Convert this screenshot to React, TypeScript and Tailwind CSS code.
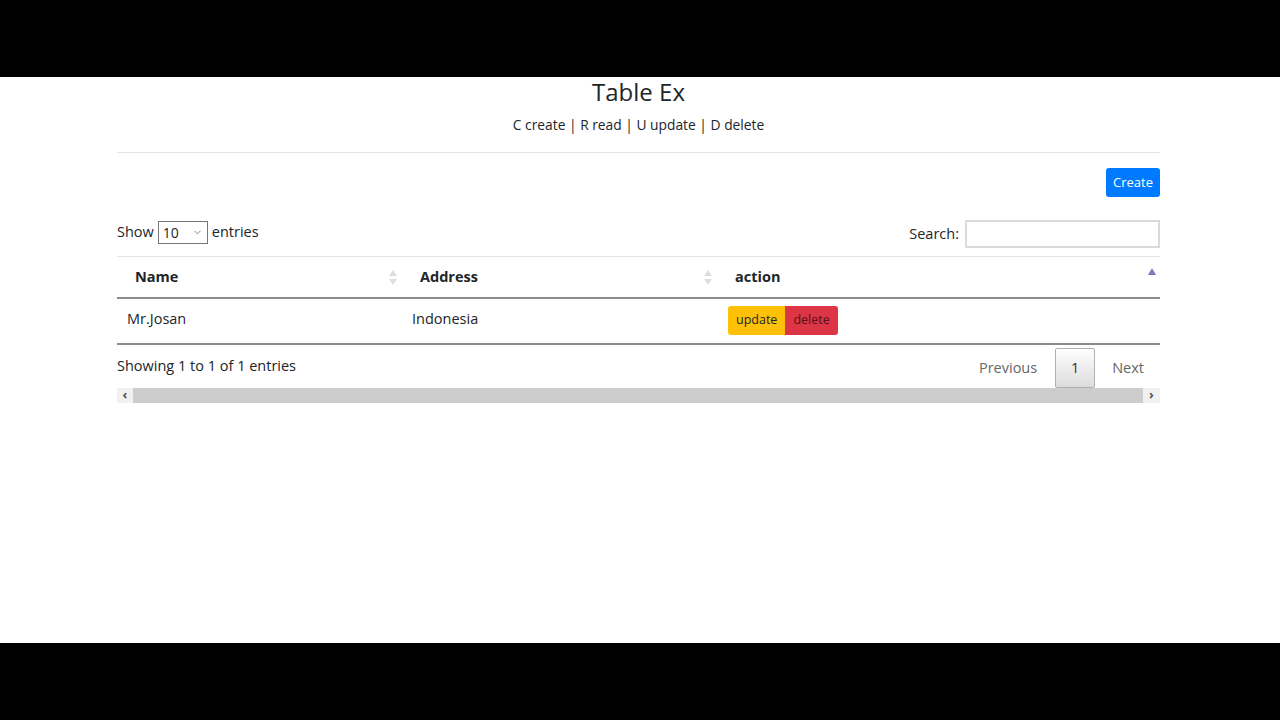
import { ChevronDown } from "lucide-react";

function SortIcon({ active }: { active?: boolean }) {
  if (active) {
    return (
      <svg className="absolute right-[4px] top-[11px]" width="8" height="7" viewBox="0 0 8 7">
        <path d="M4 0 L8 7 L0 7 Z" fill="#7a7ac0" />
      </svg>
    );
  }
  return (
    <svg className="absolute right-[5px] top-[13px]" width="8" height="15" viewBox="0 0 8 15">
      <path d="M4 0 L8 6 L0 6 Z" fill="#dedede" />
      <path d="M0 9 L8 9 L4 15 Z" fill="#dedede" />
    </svg>
  );
}

export default function App() {
  return (
    <div
      className="flex h-[720px] w-[1280px] flex-col bg-black text-[#212529]"
      style={{ fontFamily: '"Open Sans", "Liberation Sans", sans-serif' }}
    >
      <div className="h-[77px]" />
      <div className="flex h-[566px] flex-col bg-white pl-[117px] pr-[120px]">
        <h1 className="mt-[0px] text-center text-[24px] leading-[30px] text-[#212529]">Table Ex</h1>
        <p className="mt-[6px] text-center text-[13.8px] leading-[24px]">C create | R read | U update | D delete</p>
        <hr className="mt-[15px] border-t border-[#e5e5e5]" />

        <div className="mt-[15px] flex justify-end">
          <button className="h-[29px] rounded-[3px] bg-[#007bff] px-[7px] text-[13px] text-white">Create</button>
        </div>

        <div className="mt-[19px] flex items-center justify-between">
          <div className="flex items-center gap-[4px] text-[14.5px]">
            <span>Show</span>
            <div className="flex h-[23px] w-[50px] items-center justify-between border border-[#767676] bg-white px-[4px] text-[14px]">
              <span>10</span>
              <ChevronDown size={11} strokeWidth={1.5} className="text-[#555]" />
            </div>
            <span>entries</span>
          </div>
          <div className="mt-[4px] flex items-center gap-[6px] text-[14.5px]">
            <span>Search:</span>
            <div className="h-[28px] w-[195px] border-2 border-[#dadada] bg-white" />
          </div>
        </div>

        <table className="mt-[8px] w-full border-collapse text-[14.5px]">
          <thead>
            <tr className="border-t border-[#e5e5e5] border-b-2 border-b-[#8c8c8c]">
              <th className="relative h-[41px] w-[285px] pl-[18px] text-left font-bold">
                Name
                <SortIcon />
              </th>
              <th className="relative w-[315px] pl-[18px] text-left font-bold">
                Address
                <SortIcon />
              </th>
              <th className="relative pl-[18px] text-left font-bold">
                action
                <SortIcon active />
              </th>
            </tr>
          </thead>
          <tbody>
            <tr className="border-b-2 border-[#8c8c8c]">
              <td className="h-[46px] pl-[10px] pb-[4px]">Mr.Josan</td>
              <td className="pl-[10px] pb-[4px]">Indonesia</td>
              <td className="pl-[11px]">
                <div className="flex">
                  <button className="h-[29px] rounded-l-[3px] bg-[#ffc107] px-[8px] text-[12.5px] text-[#212529]">update</button>
                  <button className="h-[29px] rounded-r-[3px] bg-[#dc3545] px-[8px] text-[12.5px] text-[#5a1018]">delete</button>
                </div>
              </td>
            </tr>
          </tbody>
        </table>

        <div className="flex h-[43px] items-center justify-between text-[14.5px]">
          <span>Showing 1 to 1 of 1 entries</span>
          <div className="flex items-center self-end">
            <span className="px-[18px] text-[#666]">Previous</span>
            <span className="flex h-[40px] w-[40px] items-center justify-center rounded-[2px] border border-[#b0b0b0] bg-gradient-to-b from-white to-[#dcdcdc] text-[#333]">
              1
            </span>
            <span className="px-[17px] pr-[16px] text-[#666]">Next</span>
          </div>
        </div>

        <div className="flex h-[15px] items-center bg-[#f1f1f1]">
          <span className="flex w-[16px] items-center justify-center text-[13px] font-bold text-[#505050]">‹</span>
          <div className="h-[15px] flex-1 bg-[#cdcdcd]" />
          <span className="flex w-[17px] items-center justify-center text-[13px] font-bold text-[#505050]">›</span>
        </div>
      </div>
      <div className="flex-1" />
    </div>
  );
}
